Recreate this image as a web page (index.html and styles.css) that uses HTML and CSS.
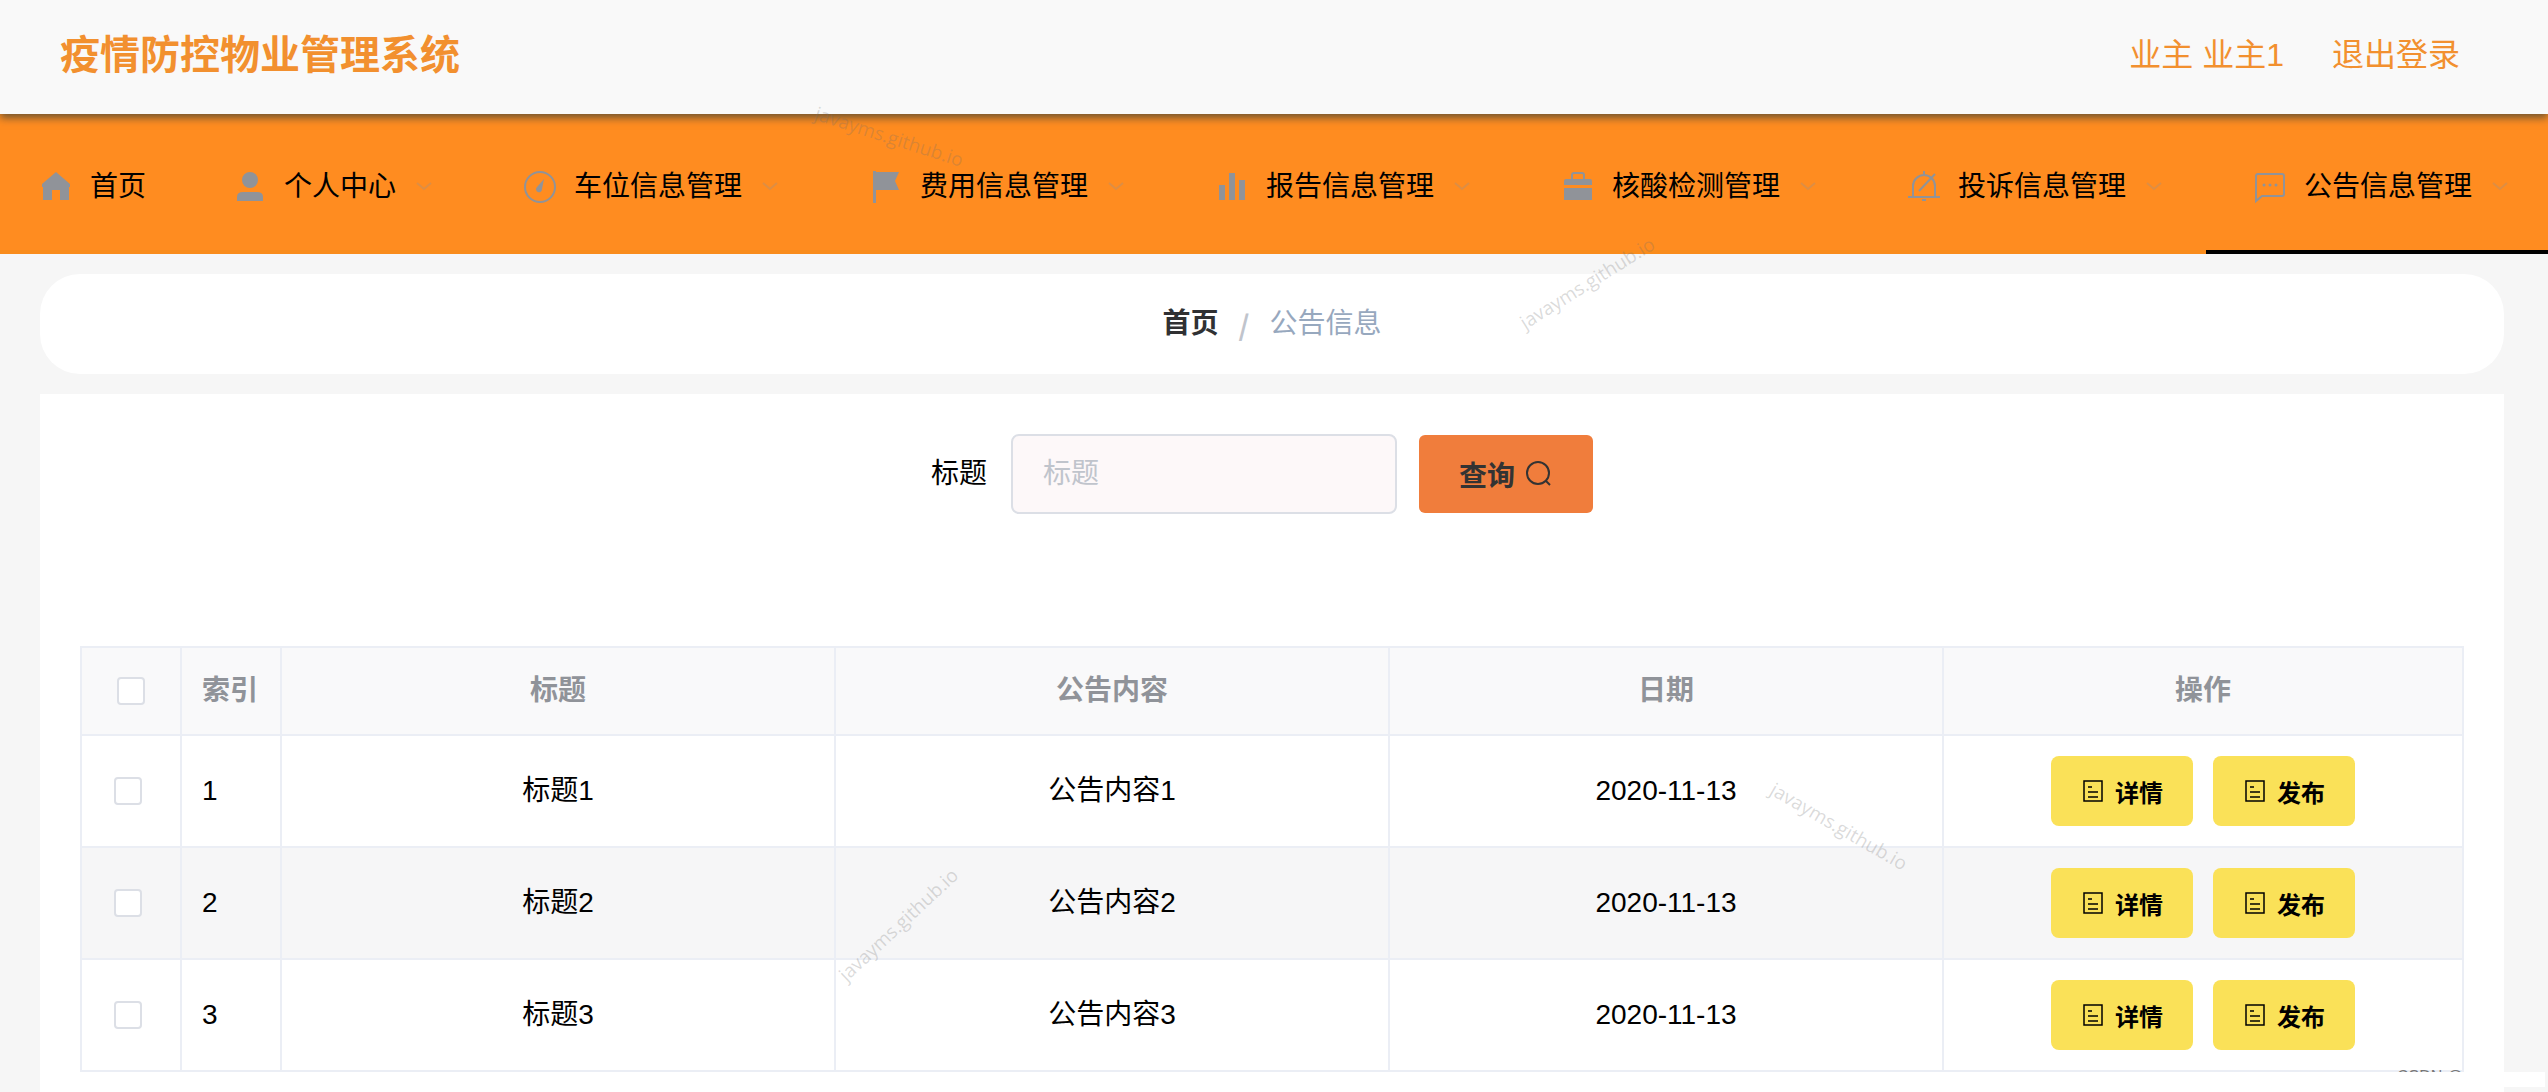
FILE: index.html
```
<!DOCTYPE html>
<html lang="zh-CN">
<head>
    <meta charset="UTF-8">
    <meta name="viewport" content="width=device-width, initial-scale=1.0">
    <title>疫情防控物业管理系统</title>
    <link rel="stylesheet" href="styles.css">
</head>
<body>
    <!-- icon set -->
    <svg class="icon-defs" aria-hidden="true">
        <symbol id="icon-home" viewBox="0 0 36 36">
            <path d="M18 3 L32 15 V18 H31 V31 H22 V21 H14 V31 H5 V18 H4 V15 Z" fill="currentColor"/>
        </symbol>
        <symbol id="icon-user" viewBox="0 0 36 36">
            <circle cx="18" cy="11" r="8" fill="currentColor"/>
            <path d="M5 32 V28 Q5 23 11 23 H25 Q31 23 31 28 V32 Z" fill="currentColor"/>
        </symbol>
        <symbol id="icon-gauge" viewBox="0 0 36 36">
            <circle cx="18" cy="18" r="15" fill="none" stroke="currentColor" stroke-width="2"/>
            <path d="M22 10 L20 20 A3 3 0 1 1 15 18 Z" fill="currentColor"/>
        </symbol>
        <symbol id="icon-flag" viewBox="0 0 36 36">
            <path d="M5 2 H8 V3 H31 L27 12 L31 21 H8 V34 H5 Z" fill="currentColor"/>
        </symbol>
        <symbol id="icon-bars" viewBox="0 0 36 36">
            <path d="M5 16 H11 V31 H5 Z M15 4 H21 V31 H15 Z M25 11 H31 V31 H25 Z" fill="currentColor"/>
        </symbol>
        <symbol id="icon-case" viewBox="0 0 36 36">
            <path d="M12 10 V6 Q12 4 14 4 H22 Q24 4 24 6 V10" fill="none" stroke="currentColor" stroke-width="2"/>
            <path d="M4 16 V12 Q4 10 6 10 H30 Q32 10 32 12 V16 Z M4 19 H32 V31 H4 Z" fill="currentColor"/>
        </symbol>
        <symbol id="icon-bell-off" viewBox="0 0 36 36">
            <path d="M7 28 V17 A11 11 0 0 1 29 17 V28 M2 28 H34 M16 31 H20 M18 2 V6 M13 22 L29 5" fill="none" stroke="currentColor" stroke-width="2"/>
        </symbol>
        <symbol id="icon-chat" viewBox="0 0 36 36">
            <path d="M4 32 V7 Q4 5 6 5 H30 Q32 5 32 7 V25 Q32 27 30 27 H10 Z" fill="none" stroke="currentColor" stroke-width="2"/>
            <circle cx="12" cy="16" r="1.500" fill="currentColor"/>
            <circle cx="18" cy="16" r="1.500" fill="currentColor"/>
            <circle cx="24" cy="16" r="1.500" fill="currentColor"/>
        </symbol>
        <symbol id="icon-arrow" viewBox="0 0 24 24">
            <path d="M5 8 L12 14 L19 8" fill="none" stroke="currentColor" stroke-width="2"/>
        </symbol>
        <symbol id="icon-search" viewBox="0 0 28 28">
            <circle cx="13" cy="13" r="11" fill="none" stroke="currentColor" stroke-width="2"/>
            <path d="M21 21 L25 25" stroke="currentColor" stroke-width="2"/>
        </symbol>
        <symbol id="icon-doc" viewBox="0 0 24 24">
            <path d="M3 2 H21 V22 H3 Z M7 8 H11 M7 13 H17 M7 18 H17" fill="none" stroke="currentColor" stroke-width="1.500"/>
        </symbol>
    </svg>

    <header class="header">
        <h1 class="title">疫情防控物业管理系统</h1>
        <div class="user-info">
            <span>业主 业主1</span>
            <a href="#">退出登录</a>
        </div>
    </header>

    <nav class="nav">
        <a class="nav-item" href="#"><svg class="nav-icon"><use href="#icon-home"/></svg><span>首页</span></a>
        <a class="nav-item" href="#"><svg class="nav-icon"><use href="#icon-user"/></svg><span>个人中心</span><svg class="nav-arrow"><use href="#icon-arrow"/></svg></a>
        <a class="nav-item" href="#"><svg class="nav-icon"><use href="#icon-gauge"/></svg><span>车位信息管理</span><svg class="nav-arrow"><use href="#icon-arrow"/></svg></a>
        <a class="nav-item" href="#"><svg class="nav-icon"><use href="#icon-flag"/></svg><span>费用信息管理</span><svg class="nav-arrow"><use href="#icon-arrow"/></svg></a>
        <a class="nav-item" href="#"><svg class="nav-icon"><use href="#icon-bars"/></svg><span>报告信息管理</span><svg class="nav-arrow"><use href="#icon-arrow"/></svg></a>
        <a class="nav-item" href="#"><svg class="nav-icon"><use href="#icon-case"/></svg><span>核酸检测管理</span><svg class="nav-arrow"><use href="#icon-arrow"/></svg></a>
        <a class="nav-item" href="#"><svg class="nav-icon"><use href="#icon-bell-off"/></svg><span>投诉信息管理</span><svg class="nav-arrow"><use href="#icon-arrow"/></svg></a>
        <a class="nav-item active" href="#"><svg class="nav-icon"><use href="#icon-chat"/></svg><span>公告信息管理</span><svg class="nav-arrow"><use href="#icon-arrow"/></svg></a>
    </nav>

    <main class="page">
        <div class="breadcrumb">
            <a href="#">首页</a>
            <span class="separator">/</span>
            <span class="current">公告信息</span>
        </div>

        <section class="content">
            <form class="search-form">
                <label for="search-title">标题</label>
                <input type="text" id="search-title" placeholder="标题">
                <button type="button" class="search-btn">查询<svg><use href="#icon-search"/></svg></button>
            </form>

            <table class="data-table">
                <colgroup>
                    <col class="col-check">
                    <col class="col-index">
                    <col>
                    <col>
                    <col>
                    <col class="col-action">
                </colgroup>
                <thead>
                    <tr>
                        <th class="check-all"><input type="checkbox" aria-label="全选"></th>
                        <th class="index">索引</th>
                        <th>标题</th>
                        <th>公告内容</th>
                        <th>日期</th>
                        <th>操作</th>
                    </tr>
                </thead>
                <tbody>
                    <tr>
                        <td class="check"><input type="checkbox" aria-label="选择1"></td>
                        <td class="index">1</td>
                        <td>标题1</td>
                        <td>公告内容1</td>
                        <td>2020-11-13</td>
                        <td>
                            <div class="actions">
                                <button type="button" class="row-btn"><svg><use href="#icon-doc"/></svg>详情</button>
                                <button type="button" class="row-btn"><svg><use href="#icon-doc"/></svg>发布</button>
                            </div>
                        </td>
                    </tr>
                    <tr>
                        <td class="check"><input type="checkbox" aria-label="选择2"></td>
                        <td class="index">2</td>
                        <td>标题2</td>
                        <td>公告内容2</td>
                        <td>2020-11-13</td>
                        <td>
                            <div class="actions">
                                <button type="button" class="row-btn"><svg><use href="#icon-doc"/></svg>详情</button>
                                <button type="button" class="row-btn"><svg><use href="#icon-doc"/></svg>发布</button>
                            </div>
                        </td>
                    </tr>
                    <tr>
                        <td class="check"><input type="checkbox" aria-label="选择3"></td>
                        <td class="index">3</td>
                        <td>标题3</td>
                        <td>公告内容3</td>
                        <td>2020-11-13</td>
                        <td>
                            <div class="actions">
                                <button type="button" class="row-btn"><svg><use href="#icon-doc"/></svg>详情</button>
                                <button type="button" class="row-btn"><svg><use href="#icon-doc"/></svg>发布</button>
                            </div>
                        </td>
                    </tr>
                </tbody>
            </table>
        </section>
    </main>

    <!-- watermarks over the page -->
    <span class="watermark mark-nav">javayms.github.io</span>
    <span class="watermark mark-crumb">javayms.github.io</span>
    <span class="watermark mark-left">javayms.github.io</span>
    <span class="watermark mark-right">javayms.github.io</span>
    <div class="corner">
        <span class="corner-text">CSDN @</span>
        <div class="corner-cover"></div>
    </div>
</body>
</html>
```

FILE: styles.css
```
* {
    box-sizing: border-box;
}

body {
    margin: 0;
    position: relative;
    display: flex;
    flex-direction: column;
    min-height: 100vh;
    background: #f6f6f6;
    font-family: "Liberation Sans", "Noto Sans CJK SC", sans-serif;
    font-size: 28px;
    line-height: 40px;
    color: #000;
}

a {
    color: inherit;
    text-decoration: none;
}

button,
input {
    font-family: inherit;
    font-size: inherit;
}

.icon-defs {
    position: absolute;
    width: 0;
    height: 0;
}

/* Header */
.header {
    position: relative;
    z-index: 1;
    display: flex;
    align-items: center;
    justify-content: space-between;
    height: 114px;
    padding: 0 88px 4px 60px;
    background: #f9f9f9;
    color: #f2902f;
    box-shadow: 0 4px 8px rgba(20, 50, 60, 0.6);
}

.title {
    margin: 0;
    font-size: 40px;
    font-weight: bold;
}

.user-info {
    display: flex;
    gap: 48px;
    font-size: 32px;
}

/* Navigation */
.nav {
    display: flex;
    height: 140px;
    overflow: hidden;
    background: #ff8c20;
}

.nav-item {
    display: flex;
    flex-shrink: 0;
    align-items: center;
    padding: 10px 40px 0;
    border-bottom: 4px solid #f98c1c;
}

.nav-item:first-child {
    padding-left: 32px;
}

.nav-item.active {
    border-bottom-color: #000;
}

.nav-icon {
    width: 48px;
    height: 36px;
    margin-right: 10px;
    color: #909399;
}

.nav-arrow {
    width: 24px;
    height: 24px;
    margin-left: 16px;
    color: #909399;
    opacity: 0.3;
}

/* Page */
.page {
    display: flex;
    flex: 1;
    flex-direction: column;
    gap: 20px;
    padding: 20px 44px 0 40px;
}

.breadcrumb {
    display: flex;
    align-items: center;
    justify-content: center;
    gap: 20px;
    height: 100px;
    border-radius: 40px;
    background: #fff;
    color: #303133;
    font-weight: bold;
}

.separator {
    color: #c0c4cc;
    font-family: "Noto Sans CJK SC", sans-serif;
}

.current {
    color: #97a8be;
    font-weight: normal;
}

.content {
    flex: 1;
    padding: 40px 40px 20px;
    background: #fff;
}

.search-form {
    display: flex;
    align-items: center;
    justify-content: center;
    height: 80px;
    margin-bottom: 132px;
    padding-right: 20px;
}

.search-form label {
    margin-right: 24px;
}

.search-form input {
    width: 386px;
    height: 80px;
    margin-right: 22px;
    padding: 0 30px;
    border: 2px solid #dcdfe6;
    border-radius: 8px;
    background: #fdf8f9;
}

.search-form input::placeholder {
    color: #c0c4cc;
}

.search-btn {
    display: flex;
    align-items: center;
    gap: 10px;
    height: 78px;
    padding: 0 40px;
    border: none;
    border-radius: 6px;
    background: #f07d3c;
    color: #333;
    font-weight: bold;
}

.search-btn svg {
    width: 28px;
    height: 28px;
}

/* Table */
.data-table {
    width: 100%;
    table-layout: fixed;
    border-collapse: separate;
    border-spacing: 0;
    border-top: 2px solid #ebeef5;
    border-left: 2px solid #ebeef5;
}

.col-check,
.col-index {
    width: 100px;
}

.col-action {
    width: 520px;
}

.data-table th,
.data-table td {
    padding: 0;
    border-right: 2px solid #ebeef5;
    border-bottom: 2px solid #ebeef5;
    text-align: center;
}

.data-table th {
    height: 88px;
    background: #f9f9fa;
    color: #909399;
}

.data-table td {
    height: 112px;
}

.data-table tbody tr:nth-child(even) {
    background: #f6f6f7;
}

.data-table .index {
    padding-left: 20px;
    text-align: left;
}

.data-table .check {
    padding-right: 6px;
}

.data-table input {
    display: block;
    width: 28px;
    height: 28px;
    margin: 0 auto;
    appearance: none;
    border: 2px solid #dcdfe6;
    border-radius: 4px;
    background: #fff;
}

.actions {
    display: flex;
    justify-content: center;
    gap: 20px;
}

.row-btn {
    display: flex;
    align-items: center;
    gap: 10px;
    height: 70px;
    padding: 0 30px;
    border: none;
    border-radius: 8px;
    background: #fae158;
    color: #000;
    font-size: 24px;
    font-weight: bold;
}

.row-btn svg {
    width: 24px;
    height: 24px;
}

/* Watermarks */
.watermark {
    position: absolute;
    z-index: 2;
    transform-origin: left bottom;
    color: rgba(110, 110, 110, 0.25);
    font-family: "Open Sans", sans-serif;
    font-size: 19px;
    line-height: 24px;
    pointer-events: none;
}

.mark-nav {
    top: 100px;
    left: 812px;
    transform: rotate(18deg);
}

.mark-crumb {
    top: 310px;
    left: 1528px;
    transform: rotate(-32deg);
}

.mark-left {
    top: 962px;
    left: 850px;
    transform: rotate(-43deg);
}

.mark-right {
    top: 774px;
    left: 1766px;
    transform: rotate(30deg);
}

.corner {
    position: absolute;
    right: 3px;
    bottom: 5px;
    width: 148px;
    height: 18px;
    color: #777;
    font-size: 16px;
    line-height: 16px;
}

.corner-text {
    display: block;
}

/* white strip that hides the lower part of the corner text */
.corner-cover {
    position: absolute;
    inset: 3px 0 0;
    background: #fff;
}
```
